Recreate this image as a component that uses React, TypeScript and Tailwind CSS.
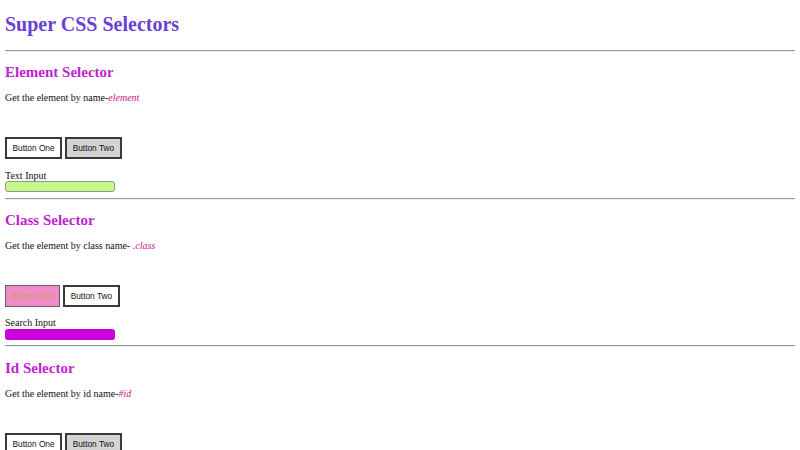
import React from "react";

function Hr() {
  return <hr className="h-0 border-0 border-t border-b border-t-[#9a9a9a] border-b-[#eeeeee]" />;
}

type Btn = { label: string; cls: string };

function Section({
  title,
  desc,
  sel,
  buttons,
  inputLabel,
  inputCls,
  last,
}: {
  title: string;
  desc: string;
  sel: string;
  buttons: Btn[];
  inputLabel?: string;
  inputCls?: string;
  last?: boolean;
}) {
  return (
    <div>
      <h2 className="mt-[12.5px] text-[15px] leading-[17.25px] font-bold text-[#c21fd3]">{title}</h2>
      <p className="mt-[10.5px] text-[10px] leading-[11.5px] text-[#111]">
        {desc}
        <em className="text-[#c31b86]">{sel}</em>
      </p>
      <div className="mt-[33.5px] flex gap-[3px]">
        {buttons.map((b) => (
          <button
            key={b.label}
            className={`h-[22px] px-[5.5px] text-[8.33px] leading-[10px] font-['Liberation_Sans',sans-serif] ${b.cls}`}
          >
            {b.label}
          </button>
        ))}
      </div>
      {inputLabel && (
        <>
          <div className="mt-[10.5px] text-[10px] leading-[11.5px] text-[#111]">{inputLabel}</div>
          <div className={`w-[110px] h-[11px] rounded-[3px] ${inputCls}`} />
          <div className="mt-[5.5px]">{!last && <Hr />}</div>
        </>
      )}
    </div>
  );
}

export default function App() {
  return (
    <div className="h-[450px] bg-white px-[5px] font-['Liberation_Serif',serif] text-black overflow-hidden">
      <h1 className="pt-[13.4px] pb-[13.4px] text-[20px] leading-[23px] font-bold text-[#6a3fd4]">
        Super CSS Selectors
      </h1>
      <Hr />
      <Section
        title="Element Selector"
        desc="Get the element by name-"
        sel="element"
        buttons={[
          { label: "Button One", cls: "bg-white border-2 border-[#3a3a3a] text-[#111]" },
          { label: "Button Two", cls: "bg-[#d3d3d3] border-2 border-[#3a3a3a] text-[#111]" },
        ]}
        inputLabel="Text Input"
        inputCls="bg-[#c6f78e] border border-[#8a9a7a]"
      />
      <Section
        title="Class Selector"
        desc="Get the element by class name- "
        sel=".class"
        buttons={[
          { label: "Button One", cls: "bg-[#f28cc6] border border-[#6a5a64] text-[#c9a05e]" },
          { label: "Button Two", cls: "bg-white border-2 border-[#3a3a3a] text-[#111]" },
        ]}
        inputLabel="Search Input"
        inputCls="bg-[#cc00df]"
      />
      <Section
        title="Id Selector"
        desc="Get the element by id name-"
        sel="#id"
        buttons={[
          { label: "Button One", cls: "bg-white border-2 border-[#3a3a3a] text-[#111]" },
          { label: "Button Two", cls: "bg-[#d3d3d3] border-2 border-[#3a3a3a] text-[#111]" },
        ]}
      />
    </div>
  );
}
